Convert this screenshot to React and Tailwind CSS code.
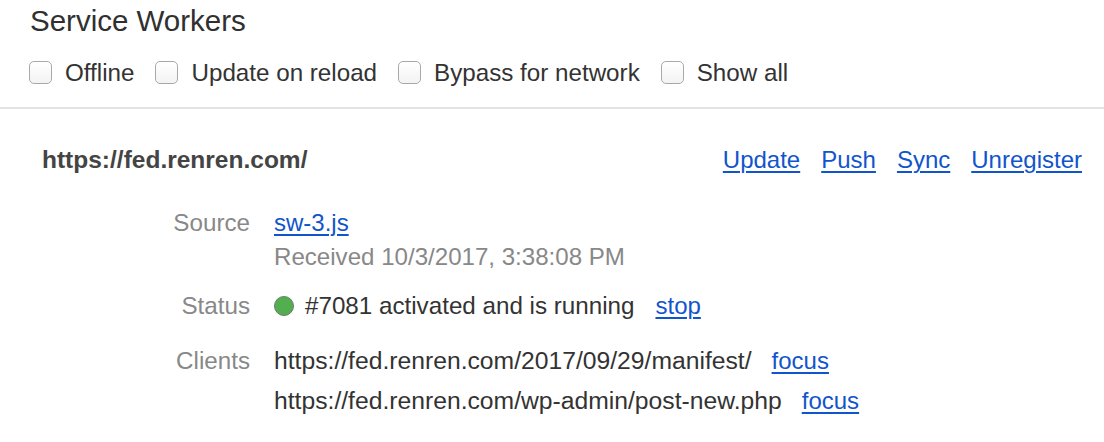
import React from 'react';

const font = { fontFamily: '"Liberation Sans", Arial, sans-serif' };

const Checkbox = ({ label }) => (
    <label className="flex items-center">
        <span className="w-[23px] h-[23px] rounded-[5px] border border-[#a9a9a9] bg-gradient-to-b from-white to-[#f3f3f3] shadow-[inset_0_1px_0_rgba(255,255,255,0.8)]" />
        <span className="ml-[13px] text-[24.2px] text-[#333]">{label}</span>
    </label>
);

const LinkText = ({ children, className = '' }) => (
    <a href="#" className={`text-[24px] text-[#1155cc] underline underline-offset-[3px] decoration-[1.5px] ${className}`}>
        {children}
    </a>
);

const Row = ({ label, children, h = 'h-[34px]' }) => (
    <div className={`grid grid-cols-[208px_1fr] gap-x-[24px] items-center ${h}`}>
        <div className="text-right text-[#888]">{label}</div>
        <div className="flex items-center whitespace-nowrap">{children}</div>
    </div>
);

export default function App() {
    const toolbar = ['Offline', 'Update on reload', 'Bypass for network', 'Show all'];
    const clients = [
        'https://fed.renren.com/2017/09/29/manifest/',
        'https://fed.renren.com/wp-admin/post-new.php',
    ];

    return (
        <div className="w-[1104px] h-[442px] bg-white overflow-hidden text-[24.2px] text-[#333]" style={font}>
            <div className="pb-[11px] border-b-2 border-[#e3e3e3]">
                <div className="h-[42px] flex items-center pl-[30px] text-[29.5px] text-[#303030]">Service Workers</div>
                <div className="mt-[8px] h-[46px] flex items-center gap-[21px] pl-[29px]">
                    {toolbar.map((t) => (
                        <Checkbox key={t} label={t} />
                    ))}
                </div>
            </div>

            <div className="mt-[31px] h-[40px] flex items-center justify-between pl-[42px] pr-[22px]">
                <div className="font-bold text-[24.5px] text-[#444]">https://fed.renren.com/</div>
                <div className="flex gap-[21px]">
                    <LinkText>Update</LinkText>
                    <LinkText>Push</LinkText>
                    <LinkText>Sync</LinkText>
                    <LinkText>Unregister</LinkText>
                </div>
            </div>

            <div className="mt-[25px] pl-[42px]">
                <Row label="Source">
                    <LinkText>sw-3.js</LinkText>
                </Row>
                <Row label="">
                    <span className="text-[24.1px] text-[#888]">Received 10/3/2017, 3:38:08 PM</span>
                </Row>
                <div className="mt-[15px]">
                    <Row label="Status">
                        <span className="w-[20px] h-[20px] rounded-full bg-[#52ae4f] border border-[#6f7a6e]" />
                        <span className="ml-[11px]">#7081 activated and is running</span>
                        <LinkText className="ml-[21px]">stop</LinkText>
                    </Row>
                </div>
                <div className="mt-[19px]">
                    {clients.map((c, i) => (
                        <Row key={c} label={i === 0 ? 'Clients' : ''} h="h-[40px]">
                            <span className="text-[24.7px]">{c}</span>
                            <LinkText className="ml-[20px]">focus</LinkText>
                        </Row>
                    ))}
                </div>
            </div>
        </div>
    );
}
